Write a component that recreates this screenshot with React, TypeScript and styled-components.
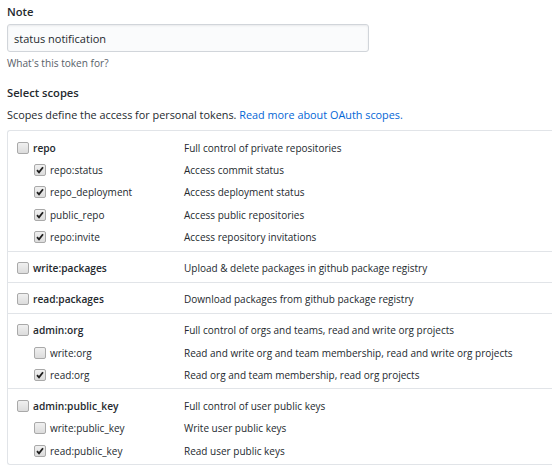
import React from "react";
import styled, { createGlobalStyle } from "styled-components";

const Global = createGlobalStyle`
  html, body { margin: 0; padding: 0; background: #fff; overflow: hidden; }
  body { font-family: "Open Sans", "Noto Sans", sans-serif; font-size: 11px; color: #24292e; }
`;

const Page = styled.div`
  padding: 4px 0 0 7px;
  width: 545px;
  overflow: hidden;
`;

const FieldLabel = styled.div`
  font-weight: 600;
  font-size: 11.2px;
  line-height: 16px;
`;

const TextInput = styled.div`
  box-sizing: border-box;
  margin-top: 4px;
  width: 362px;
  height: 28px;
  padding: 0 6px;
  display: flex;
  align-items: center;
  background: #fafbfc;
  border: 1px solid #d1d5da;
  border-radius: 3px;
  box-shadow: inset 0 1px 2px rgba(27, 31, 35, 0.075);
  font-size: 11px;
  color: #24292e;
`;

const Hint = styled.p`
  margin: 3px 0 0;
  font-size: 10.1px;
  line-height: 16px;
  color: #586069;
`;

const SectionTitle = styled(FieldLabel)`
  margin-top: 14px;
`;

const Desc = styled.p`
  margin: 6px 0 0;
  font-size: 10.85px;
  line-height: 16px;
  white-space: nowrap;
`;

const Link = styled.a`
  color: #0366d6;
  text-decoration: none;
`;

const ScopeBox = styled.div`
  margin-top: 7px;
  border: 1px solid #e1e4e8;
  border-right: none;
  border-radius: 3px 0 0 3px;
`;

const Group = styled.div`
  padding: 5.5px 0 2.1px 9px;
  border-top: 1px solid #e1e4e8;
  &:first-child { border-top: none; }
`;

const Row = styled.label<{ $sub?: boolean }>`
  display: grid;
  grid-template-columns: ${(p) => (p.$sub ? "150px" : "167px")} 1fr;
  padding-left: ${(p) => (p.$sub ? "17px" : "0")};
  height: 22.4px;
  align-items: center;
  white-space: nowrap;
  font-size: 10px;
`;

const Name = styled.span<{ $sub?: boolean }>`
  display: flex;
  align-items: center;
  gap: 4px;
  font-weight: ${(p) => (p.$sub ? 400 : 600)};
  font-size: ${(p) => (p.$sub ? "10px" : "10.2px")};
`;

const Box = styled.span`
  box-sizing: border-box;
  flex: none;
  width: 12px;
  height: 12px;
  border: 1px solid #a9a9a9;
  border-radius: 2px;
  background: linear-gradient(#f0f0f0, #dcdcdc);
  display: inline-flex;
  align-items: center;
  justify-content: center;
`;

const Explain = styled.span`
  color: #24292e;
`;

function Check({ on }: { on?: boolean }) {
  return (
    <Box>
      {on && (
        <svg width="8" height="8" viewBox="0 0 8 8">
          <path d="M1 4.2 L3 6.4 L7 1.2" fill="none" stroke="#1e1e1e" strokeWidth="1.8" />
        </svg>
      )}
    </Box>
  );
}

type Scope = { name: string; desc: string; on?: boolean; sub?: Scope[] };

const scopes: Scope[] = [
  {
    name: "repo",
    desc: "Full control of private repositories",
    sub: [
      { name: "repo:status", desc: "Access commit status", on: true },
      { name: "repo_deployment", desc: "Access deployment status", on: true },
      { name: "public_repo", desc: "Access public repositories", on: true },
      { name: "repo:invite", desc: "Access repository invitations", on: true },
    ],
  },
  { name: "write:packages", desc: "Upload & delete packages in github package registry" },
  { name: "read:packages", desc: "Download packages from github package registry" },
  {
    name: "admin:org",
    desc: "Full control of orgs and teams, read and write org projects",
    sub: [
      { name: "write:org", desc: "Read and write org and team membership, read and write org projects" },
      { name: "read:org", desc: "Read org and team membership, read org projects", on: true },
    ],
  },
  {
    name: "admin:public_key",
    desc: "Full control of user public keys",
    sub: [
      { name: "write:public_key", desc: "Write user public keys" },
      { name: "read:public_key", desc: "Read user public keys", on: true },
    ],
  },
];

export default function App() {
  return (
    <>
      <Global />
      <Page>
        <FieldLabel>Note</FieldLabel>
        <TextInput>status notification</TextInput>
        <Hint>What's this token for?</Hint>
        <SectionTitle>Select scopes</SectionTitle>
        <Desc>
          Scopes define the access for personal tokens. <Link href="#">Read more about OAuth scopes.</Link>
        </Desc>
        <ScopeBox>
          {scopes.map((s) => (
            <Group key={s.name}>
              <Row>
                <Name>
                  <Check on={s.on} />
                  {s.name}
                </Name>
                <Explain>{s.desc}</Explain>
              </Row>
              {s.sub?.map((c) => (
                <Row $sub key={c.name}>
                  <Name $sub>
                    <Check on={c.on} />
                    {c.name}
                  </Name>
                  <Explain>{c.desc}</Explain>
                </Row>
              ))}
            </Group>
          ))}
        </ScopeBox>
      </Page>
    </>
  );
}
